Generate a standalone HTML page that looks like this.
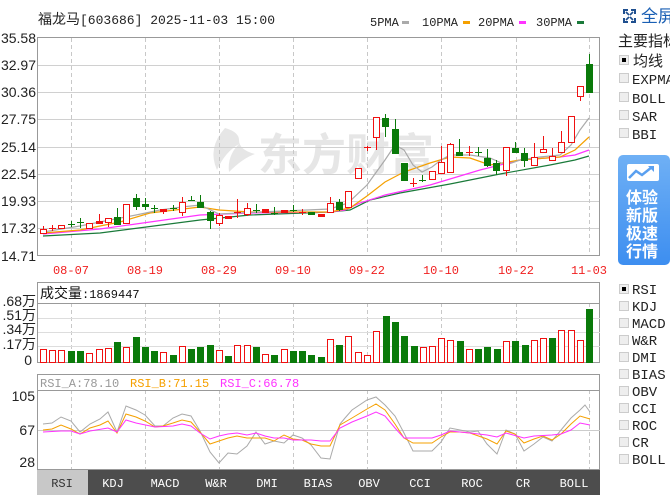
<!DOCTYPE html>
<html><head><meta charset="utf-8"><style>
html,body{margin:0;padding:0;background:#fff;width:670px;height:501px;overflow:hidden}
svg{display:block}
.m{font-family:"Liberation Mono","Noto Sans CJK SC",monospace}
.s{font-family:"Liberation Sans","Noto Sans CJK SC",sans-serif}
</style></head><body>
<svg width="670" height="501" viewBox="0 0 670 501" xmlns="http://www.w3.org/2000/svg">
<!-- title -->
<text x="38" y="24" class="s" font-size="14" fill="#222">福龙马<tspan class="m" font-size="13">[603686] 2025-11-03 15:00</tspan></text>
<g class="m" font-size="12" fill="#222">
<text x="370" y="26">5PMA</text><rect x="402" y="21" width="7" height="3" fill="#aaa"/>
<text x="422" y="26">10PMA</text><rect x="463" y="21" width="7" height="3" fill="#f5a000"/>
<text x="478" y="26">20PMA</text><rect x="519" y="21" width="7" height="3" fill="#ff33ff"/>
<text x="536" y="26">30PMA</text><rect x="577" y="21" width="7" height="3" fill="#1a7a3a"/>
</g>
<!-- watermark -->
<g fill="#e6e6e6">
<path d="M225 128 q-18 20 -8 42 q8 -18 22 -26 q-12 12 -10 28 q14 -14 26 -18 q-16 -4 -16 -14 q0 -8 -14 -12z"/>
<text x="258" y="170" class="s" font-size="44" font-weight="bold">东方财富</text>
</g>
<!-- main chart grid -->
<g stroke="#d0d0d0" stroke-width="1">
<line x1="38" y1="65.5" x2="600" y2="65.5"/><line x1="38" y1="92.5" x2="600" y2="92.5"/>
<line x1="38" y1="119.5" x2="600" y2="119.5"/><line x1="38" y1="147.5" x2="600" y2="147.5"/>
<line x1="38" y1="174.5" x2="600" y2="174.5"/><line x1="38" y1="201.5" x2="600" y2="201.5"/>
<line x1="38" y1="228.5" x2="600" y2="228.5"/>
</g>
<g stroke="#c8c8c8" stroke-dasharray="4,3">
<line x1="71.5" y1="38" x2="71.5" y2="255"/><line x1="145.5" y1="38" x2="145.5" y2="255"/>
<line x1="219.5" y1="38" x2="219.5" y2="255"/><line x1="293.5" y1="38" x2="293.5" y2="255"/>
<line x1="367.5" y1="38" x2="367.5" y2="255"/><line x1="441.5" y1="38" x2="441.5" y2="255"/>
<line x1="516.5" y1="38" x2="516.5" y2="255"/><line x1="589.5" y1="38" x2="589.5" y2="255"/>
<line x1="71.5" y1="303" x2="71.5" y2="363"/><line x1="145.5" y1="303" x2="145.5" y2="363"/>
<line x1="219.5" y1="303" x2="219.5" y2="363"/><line x1="293.5" y1="303" x2="293.5" y2="363"/>
<line x1="367.5" y1="303" x2="367.5" y2="363"/><line x1="441.5" y1="303" x2="441.5" y2="363"/>
<line x1="516.5" y1="303" x2="516.5" y2="363"/><line x1="589.5" y1="303" x2="589.5" y2="363"/>
<line x1="71.5" y1="390" x2="71.5" y2="469"/><line x1="145.5" y1="390" x2="145.5" y2="469"/>
<line x1="219.5" y1="390" x2="219.5" y2="469"/><line x1="293.5" y1="390" x2="293.5" y2="469"/>
<line x1="367.5" y1="390" x2="367.5" y2="469"/><line x1="441.5" y1="390" x2="441.5" y2="469"/>
<line x1="516.5" y1="390" x2="516.5" y2="469"/><line x1="589.5" y1="390" x2="589.5" y2="469"/>
</g>
<rect x="37.5" y="37.5" width="562" height="218" fill="none" stroke="#999"/>
<g class="s" font-size="14" fill="#222" text-anchor="end">
<text x="36" y="43">35.58</text><text x="36" y="70">32.97</text><text x="36" y="97">30.36</text>
<text x="36" y="124">27.75</text><text x="36" y="152">25.14</text><text x="36" y="179">22.54</text>
<text x="36" y="206">19.93</text><text x="36" y="233">17.32</text><text x="36" y="261">14.71</text>
</g>
<g class="m" font-size="12" fill="#f02020" text-anchor="middle">
<text x="71" y="274">08-07</text><text x="145" y="274">08-19</text><text x="219" y="274">08-29</text>
<text x="293" y="274">09-10</text><text x="367" y="274">09-22</text><text x="441" y="274">10-10</text>
<text x="516" y="274">10-22</text><text x="589" y="274">11-03</text>
</g>
<!-- MA lines -->
<g fill="none" stroke-width="1.2">
<polyline stroke="#1a7a3a" points="43,236 100,233 200,220 250,215 330,212 350,210 370,200 400,193 450,184 500,174 550,165 575,160 589,156"/>
<polyline stroke="#ff33ff" points="43,234 100,229 150,222 200,215 250,213 330,212 345,210 360,203 385,195 430,185 480,170 520,160 560,157 575,155 589,150"/>
<polyline stroke="#f5a000" points="43,233 80,230 120,222 150,213 200,207 219,210 250,212 330,212 350,208 367,196 385,182 404,172 430,163 450,157 470,158 490,165 520,160 560,157 575,150 589,137"/>
<polyline stroke="#aaa" points="43,232 80,226 110,220 136,215 160,210 182,207 200,205 219,214 260,212 330,209 348,203 367,185 385,160 395,145 404,150 413,165 422,172 432,167 441,160 450,155 470,155 490,158 506,165 520,160 540,157 560,155 571,145 580,130 589,118"/>
</g>
<!-- candles: red hollow -->
<g stroke="#f01010" fill="#fff" stroke-width="1">
<line x1="43.5" y1="226" x2="43.5" y2="233"/><rect x="40.5" y="229.5" width="6" height="4"/>
<line x1="52.5" y1="225" x2="52.5" y2="231"/><line x1="49" y1="228.5" x2="56" y2="228.5"/>
<rect x="58.5" y="225.5" width="6" height="3"/>
<rect x="86.5" y="223.5" width="6" height="5"/>
<line x1="99.5" y1="214" x2="99.5" y2="224"/><rect x="96.5" y="221.5" width="6" height="2" fill="#f01010"/>
<line x1="108.5" y1="218" x2="108.5" y2="227"/><rect x="105.5" y="218.5" width="6" height="4"/>
<rect x="123.5" y="204.5" width="6" height="19"/>
<line x1="163.5" y1="209" x2="163.5" y2="214"/><rect x="160.5" y="209.5" width="6" height="2" fill="#f01010"/>
<line x1="182.5" y1="197" x2="182.5" y2="216"/><rect x="179.5" y="202.5" width="6" height="10"/>
<line x1="219.5" y1="213" x2="219.5" y2="226"/><rect x="216.5" y="215.5" width="6" height="8"/>
<rect x="225.5" y="216.5" width="6" height="2" fill="#f01010"/>
<line x1="237.5" y1="199" x2="237.5" y2="218"/><line x1="234" y1="212.5" x2="241" y2="212.5"/>
<line x1="247.5" y1="203" x2="247.5" y2="216"/><rect x="244.5" y="208.5" width="6" height="6"/>
<rect x="262.5" y="209.5" width="6" height="3" fill="#f01010"/>
<rect x="281.5" y="210.5" width="6" height="2" fill="#f01010"/>
<line x1="302.5" y1="209" x2="302.5" y2="215"/><line x1="299" y1="212.5" x2="306" y2="212.5"/>
<rect x="318.5" y="214.5" width="6" height="2" fill="#f01010"/>
<line x1="330.5" y1="197" x2="330.5" y2="213"/><rect x="327.5" y="203.5" width="6" height="9"/>
<rect x="345.5" y="191.5" width="6" height="16"/>
<rect x="355.5" y="168.5" width="6" height="10"/>
<line x1="367.5" y1="146" x2="367.5" y2="151"/><line x1="364" y1="147.5" x2="371" y2="147.5"/>
<line x1="376.5" y1="117" x2="376.5" y2="150"/><rect x="373.5" y="117.5" width="6" height="20"/>
<line x1="413.5" y1="178" x2="413.5" y2="187"/><line x1="410" y1="183.5" x2="417" y2="183.5"/>
<rect x="429.5" y="171.5" width="6" height="8"/>
<line x1="441.5" y1="146" x2="441.5" y2="173"/><rect x="438.5" y="162.5" width="6" height="11"/>
<line x1="450.5" y1="143" x2="450.5" y2="172"/><rect x="447.5" y="144.5" width="6" height="28"/>
<line x1="469.5" y1="146" x2="469.5" y2="156"/><line x1="466" y1="152.5" x2="473" y2="152.5"/>
<line x1="506.5" y1="147" x2="506.5" y2="176"/><rect x="503.5" y="147.5" width="6" height="23"/>
<line x1="534.5" y1="143" x2="534.5" y2="166"/><rect x="531.5" y="157.5" width="6" height="8"/>
<line x1="543.5" y1="136" x2="543.5" y2="153"/><rect x="540.5" y="149.5" width="6" height="3"/>
<line x1="552.5" y1="148" x2="552.5" y2="161"/><rect x="549.5" y="156.5" width="6" height="4"/>
<line x1="561.5" y1="131" x2="561.5" y2="153"/><rect x="558.5" y="142.5" width="6" height="10"/>
<rect x="568.5" y="116.5" width="6" height="26"/>
<line x1="580.5" y1="86" x2="580.5" y2="101"/><rect x="577.5" y="86.5" width="6" height="10"/>
</g>
<!-- candles: green -->
<g stroke="#0a7a0a" fill="#0a7a0a" stroke-width="1">
<line x1="71.5" y1="221" x2="71.5" y2="227"/><line x1="68" y1="224.5" x2="75" y2="224.5"/>
<line x1="80.5" y1="218" x2="80.5" y2="228"/><line x1="77" y1="222.5" x2="84" y2="222.5"/>
<line x1="117.5" y1="208" x2="117.5" y2="225"/><rect x="114.5" y="217.5" width="6" height="7"/>
<line x1="136.5" y1="194" x2="136.5" y2="210"/><rect x="133.5" y="198.5" width="6" height="8"/>
<line x1="145.5" y1="198" x2="145.5" y2="210"/><rect x="142.5" y="204.5" width="6" height="2"/>
<line x1="154.5" y1="205" x2="154.5" y2="213"/><line x1="151" y1="208.5" x2="158" y2="208.5"/>
<line x1="173.5" y1="205" x2="173.5" y2="211"/><line x1="170" y1="208.5" x2="177" y2="208.5"/>
<line x1="191.5" y1="196" x2="191.5" y2="201"/><line x1="188" y1="200.5" x2="195" y2="200.5"/>
<line x1="200.5" y1="195" x2="200.5" y2="208"/><rect x="197.5" y="202.5" width="6" height="5"/>
<line x1="210.5" y1="211" x2="210.5" y2="229"/><rect x="207.5" y="212.5" width="6" height="8"/>
<line x1="256.5" y1="204" x2="256.5" y2="213"/><line x1="253" y1="210.5" x2="260" y2="210.5"/>
<line x1="274.5" y1="207" x2="274.5" y2="215"/><line x1="271" y1="213.5" x2="278" y2="213.5"/>
<line x1="293.5" y1="205" x2="293.5" y2="212"/><line x1="290" y1="210.5" x2="297" y2="210.5"/>
<rect x="308.5" y="212.5" width="6" height="2"/>
<line x1="339.5" y1="199" x2="339.5" y2="211"/><rect x="336.5" y="202.5" width="6" height="7"/>
<line x1="385.5" y1="114" x2="385.5" y2="137"/><rect x="382.5" y="118.5" width="6" height="8"/>
<line x1="395.5" y1="119" x2="395.5" y2="153"/><rect x="392.5" y="129.5" width="6" height="24"/>
<rect x="401.5" y="163.5" width="6" height="17"/>
<line x1="422.5" y1="175" x2="422.5" y2="182"/><line x1="419" y1="180.5" x2="426" y2="180.5"/>
<line x1="459.5" y1="139" x2="459.5" y2="156"/><rect x="456.5" y="152.5" width="6" height="3"/>
<line x1="478.5" y1="147" x2="478.5" y2="156"/><line x1="475" y1="152.5" x2="482" y2="152.5"/>
<line x1="487.5" y1="149" x2="487.5" y2="167"/><rect x="484.5" y="158.5" width="6" height="7"/>
<line x1="496.5" y1="160" x2="496.5" y2="175"/><rect x="493.5" y="163.5" width="6" height="7"/>
<line x1="515.5" y1="142" x2="515.5" y2="153"/><rect x="512.5" y="148.5" width="6" height="4"/>
<line x1="524.5" y1="148" x2="524.5" y2="167"/><rect x="521.5" y="153.5" width="6" height="7"/>
<line x1="589.5" y1="54" x2="589.5" y2="93"/><rect x="586.5" y="64.5" width="6" height="28"/>
</g>
<!-- volume panel -->
<rect x="37.5" y="282.5" width="562" height="80" fill="none" stroke="#999"/>
<line x1="38" y1="303.5" x2="600" y2="303.5" stroke="#999"/>
<g stroke="#ddd"><line x1="38" y1="318.5" x2="600" y2="318.5"/><line x1="38" y1="332.5" x2="600" y2="332.5"/><line x1="38" y1="346.5" x2="600" y2="346.5"/></g>
<text x="40" y="298" class="s" font-size="14" fill="#111">成交量<tspan class="m" font-size="12">:1869447</tspan></text>
<g class="s" font-size="14" fill="#222" text-anchor="end">
<text x="36" y="306">.68万</text><text x="36" y="320">.51万</text><text x="36" y="334">.34万</text><text x="36" y="349">.17万</text><text x="32" y="365">0</text>
</g>
<g stroke="#f01010" fill="#fff">
<rect x="40.5" y="349.5" width="6" height="13"/><rect x="49.5" y="350.5" width="6" height="12"/><rect x="58.5" y="350.5" width="6" height="12"/>
<rect x="86.5" y="353.5" width="6" height="9"/><rect x="96.5" y="349.5" width="6" height="13"/><rect x="105.5" y="348.5" width="6" height="14"/>
<rect x="123.5" y="347.5" width="6" height="15"/><rect x="160.5" y="352.5" width="6" height="10"/><rect x="179.5" y="346.5" width="6" height="16"/>
<rect x="216.5" y="350.5" width="6" height="12"/><rect x="234.5" y="345.5" width="6" height="17"/><rect x="244.5" y="345.5" width="6" height="17"/>
<rect x="262.5" y="354.5" width="6" height="8"/><rect x="281.5" y="349.5" width="6" height="13"/><rect x="327.5" y="339.5" width="6" height="23"/>
<rect x="345.5" y="336.5" width="6" height="26"/><rect x="355.5" y="352.5" width="6" height="10"/><rect x="364.5" y="355.5" width="6" height="7"/>
<rect x="373.5" y="331.5" width="6" height="31"/><rect x="420.5" y="347.5" width="6" height="15"/><rect x="429.5" y="346.5" width="6" height="16"/>
<rect x="438.5" y="338.5" width="6" height="24"/><rect x="447.5" y="340.5" width="6" height="22"/><rect x="466.5" y="349.5" width="6" height="13"/>
<rect x="503.5" y="341.5" width="6" height="21"/><rect x="531.5" y="340.5" width="6" height="22"/><rect x="540.5" y="338.5" width="6" height="24"/>
<rect x="558.5" y="330.5" width="6" height="32"/><rect x="568.5" y="330.5" width="6" height="32"/><rect x="577.5" y="340.5" width="6" height="22"/>
</g>
<g fill="#0a7a0a">
<rect x="68" y="351" width="7" height="12"/><rect x="77" y="351" width="7" height="12"/><rect x="114" y="342" width="7" height="21"/>
<rect x="133" y="337" width="7" height="26"/><rect x="142" y="347" width="7" height="16"/><rect x="151" y="351" width="7" height="12"/>
<rect x="170" y="355" width="7" height="8"/><rect x="188" y="349" width="7" height="14"/><rect x="197" y="347" width="7" height="16"/>
<rect x="207" y="345" width="7" height="18"/><rect x="225" y="356" width="7" height="7"/><rect x="253" y="347" width="7" height="16"/>
<rect x="271" y="355" width="7" height="8"/><rect x="290" y="351" width="7" height="12"/><rect x="299" y="351" width="7" height="12"/>
<rect x="308" y="355" width="7" height="8"/><rect x="318" y="357" width="7" height="6"/><rect x="336" y="345" width="7" height="18"/>
<rect x="383" y="316" width="7" height="47"/><rect x="392" y="322" width="7" height="41"/><rect x="401" y="336" width="7" height="27"/>
<rect x="411" y="346" width="7" height="17"/><rect x="457" y="341" width="7" height="22"/><rect x="475" y="349" width="7" height="14"/>
<rect x="484" y="347" width="7" height="16"/><rect x="494" y="349" width="7" height="14"/><rect x="512" y="341" width="7" height="22"/>
<rect x="522" y="345" width="7" height="18"/><rect x="549" y="338" width="7" height="25"/><rect x="586" y="309" width="7" height="54"/>
</g>
<!-- RSI panel -->
<rect x="37.5" y="374.5" width="562" height="95" fill="none" stroke="#999"/>
<line x1="38" y1="390.5" x2="600" y2="390.5" stroke="#999"/>
<line x1="38" y1="430.5" x2="600" y2="430.5" stroke="#ccc"/>
<g class="m" font-size="12">
<text x="40" y="387" fill="#999">RSI_A:78.10</text>
<text x="130" y="387" fill="#f5a000">RSI_B:71.15</text>
<text x="220" y="387" fill="#ff33ff">RSI_C:66.78</text>
</g>
<g class="s" font-size="14" fill="#222" text-anchor="end">
<text x="35" y="401">105</text><text x="35" y="435">67</text><text x="35" y="467">28</text>
</g>
<g fill="none" stroke-width="1">
<polyline stroke="#aaa" points="43,424 52,423 61,417 71,421 80,432 90,424 100,419 108,412 117,432 126,406 136,410 145,415 155,426 163,426 173,418 182,414 191,416 200,431 210,452 219,463 228,453 237,454 247,446 256,432 265,444 274,441 284,443 293,435 302,438 311,445 321,458 330,459 340,424 345,418 352,410 367,400 376,397 385,405 395,416 404,433 413,451 422,451 432,451 441,442 450,428 460,430 470,432 478,431 487,444 497,454 506,430 515,434 524,451 534,444 543,437 552,441 561,430 571,418 580,410 585,405 590,412"/>
<polyline stroke="#f5a000" points="43,430 52,429 61,425 71,429 80,434 90,428 100,425 108,421 117,433 126,414 136,417 145,421 155,427 163,426 173,423 182,420 191,422 200,432 210,444 219,441 228,438 237,436 247,438 256,438 265,438 274,441 284,435 293,439 302,440 311,444 321,446 330,446 340,425 352,418 367,409 376,404 385,410 395,424 404,438 413,443 422,443 432,443 441,437 450,432 460,432 470,433 487,439 497,444 506,431 515,434 524,443 534,439 543,436 552,440 561,434 571,424 580,416 590,419"/>
<polyline stroke="#ff33ff" points="43,432 61,431 71,431 80,434 90,431 108,428 117,432 126,420 136,423 155,427 173,426 182,424 191,426 200,433 210,439 219,436 228,434 237,433 247,435 256,433 265,436 274,438 284,438 293,440 311,440 321,441 330,441 340,428 352,422 367,416 376,412 385,416 395,428 404,438 413,438 432,438 441,435 450,431 460,432 470,433 487,435 497,437 506,433 524,438 534,436 552,435 561,434 571,430 580,423 590,425"/>
</g>
<!-- tabs -->
<rect x="37" y="470" width="563" height="25" fill="#4d4d4d"/>
<rect x="37" y="470" width="51" height="25" fill="#c8c8c8"/>
<g class="m" font-size="12" text-anchor="middle" fill="#fff">
<text x="62" y="487" fill="#333">RSI</text><text x="113" y="487">KDJ</text><text x="165" y="487">MACD</text>
<text x="216" y="487">W&amp;R</text><text x="267" y="487">DMI</text><text x="318" y="487">BIAS</text>
<text x="369" y="487">OBV</text><text x="420" y="487">CCI</text><text x="472" y="487">ROC</text>
<text x="523" y="487">CR</text><text x="574" y="487">BOLL</text>
</g>
<!-- right panel -->
<g fill="#1f4f8f">
<path d="M623 9h5v2h-3v3h-2zM636 9h-5v2h3v3h2zM623 23h5v-2h-3v-3h-2zM636 23h-5v-2h3v-3h2z"/>
<path d="M626 12l3 3M633 20l-3-3M633 12l-3 3M626 20l3-3" stroke="#1f4f8f" stroke-width="1.6"/>
</g>
<text x="641" y="22" class="s" font-size="17" fill="#1a5fb4">全屏</text>
<text x="618" y="46" class="s" font-size="15" fill="#222">主要指标</text>
<g fill="#eee" stroke="#ccc">
<rect x="619.5" y="55.5" width="9" height="9"/><rect x="619.5" y="73.5" width="9" height="9"/><rect x="619.5" y="92.5" width="9" height="9"/>
<rect x="619.5" y="110.5" width="9" height="9"/><rect x="619.5" y="128.5" width="9" height="9"/>
<rect x="619.5" y="284.5" width="9" height="9"/><rect x="619.5" y="301.5" width="9" height="9"/><rect x="619.5" y="318.5" width="9" height="9"/>
<rect x="619.5" y="335.5" width="9" height="9"/><rect x="619.5" y="352.5" width="9" height="9"/><rect x="619.5" y="369.5" width="9" height="9"/>
<rect x="619.5" y="386.5" width="9" height="9"/><rect x="619.5" y="403.5" width="9" height="9"/><rect x="619.5" y="420.5" width="9" height="9"/>
<rect x="619.5" y="437.5" width="9" height="9"/><rect x="619.5" y="454.5" width="9" height="9"/>
</g>
<rect x="622" y="58" width="4" height="4" fill="#000"/><rect x="622" y="287" width="4" height="4" fill="#000"/>
<text x="633" y="66" class="s" font-size="15" fill="#222">均线</text>
<g class="m" font-size="14" fill="#222">
<text x="632" y="84">EXPMA</text><text x="632" y="103">BOLL</text><text x="632" y="121">SAR</text><text x="632" y="139">BBI</text>
<text x="632" y="294">RSI</text><text x="632" y="311">KDJ</text><text x="632" y="328">MACD</text><text x="632" y="345">W&amp;R</text>
<text x="632" y="362">DMI</text><text x="632" y="379">BIAS</text><text x="632" y="396">OBV</text><text x="632" y="413">CCI</text>
<text x="632" y="430">ROC</text><text x="632" y="447">CR</text><text x="632" y="464">BOLL</text>
</g>
<defs><linearGradient id="bg" x1="0" y1="0" x2="0" y2="1"><stop offset="0" stop-color="#6fb0f5"/><stop offset="1" stop-color="#3d8ef0"/></linearGradient></defs>
<rect x="618" y="155" width="52" height="110" rx="5" fill="url(#bg)"/>
<rect x="627" y="164" width="32" height="17" rx="2" fill="#fff"/>
<polyline points="629,178 636,171 642,175 652,167" fill="none" stroke="#5aa0f0" stroke-width="2.5"/>
<path d="M648 166h6v6z" fill="#5aa0f0"/>
<g class="s" font-size="16" font-weight="bold" fill="#fff">
<text x="626" y="203">体验</text><text x="626" y="221">新版</text><text x="626" y="239">极速</text><text x="626" y="257">行情</text>
</g>
</svg>
</body></html>
